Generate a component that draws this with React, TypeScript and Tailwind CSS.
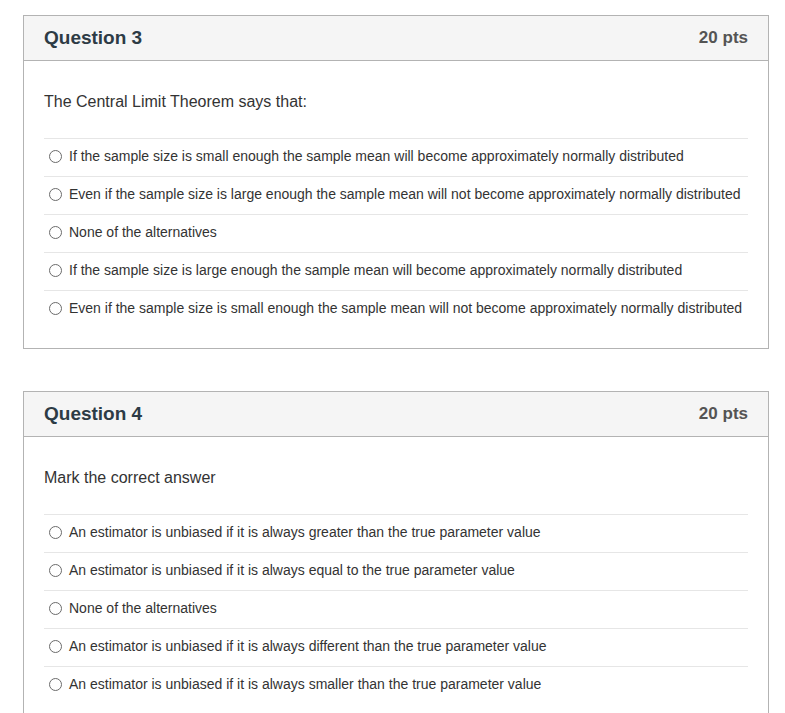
import React from "react";

const questions = [
  {
    title: "Question 3",
    pts: "20 pts",
    text: "The Central Limit Theorem says that:",
    options: [
      "If the sample size is small enough the sample mean will become approximately normally distributed",
      "Even if the sample size is large enough the sample mean will not become approximately normally distributed",
      "None of the alternatives",
      "If the sample size is large enough the sample mean will become approximately normally distributed",
      "Even if the sample size is small enough the sample mean will not become approximately normally distributed",
    ],
  },
  {
    title: "Question 4",
    pts: "20 pts",
    text: "Mark the correct answer",
    options: [
      "An estimator is unbiased if it is always greater than the true parameter value",
      "An estimator is unbiased if it is always equal to the true parameter value",
      "None of the alternatives",
      "An estimator is unbiased if it is always different than the true parameter value",
      "An estimator is unbiased if it is always smaller than the true parameter value",
    ],
  },
];

export default function App() {
  return (
    <div
      className="min-h-[713px] bg-white pl-[23px] pr-[16px] pt-[15px] text-[#2d3b45]"
      style={{ fontFamily: '"Liberation Sans", Arial, sans-serif' }}
    >
      <div className="flex flex-col gap-[42px] w-[746px]">
        {questions.map((q) => (
          <div key={q.title} className="border border-[#b3b3b3] bg-white">
            <div className="flex h-[45px] items-center justify-between border-b border-[#b3b3b3] bg-[#f5f5f5] px-[20px]">
              <span className="text-[19px] font-bold text-[#2d3b45]">{q.title}</span>
              <span className="text-[17px] font-bold text-[#545454]">{q.pts}</span>
            </div>
            <div className="px-[20px] pt-[29px] pb-[20px]">
              <div className="text-[16px] leading-[24px] text-[#333333]">{q.text}</div>
              <div className="mt-[24px]">
                {q.options.map((o) => (
                  <div
                    key={o}
                    className="flex h-[38px] items-center border-t border-[#e6e6e6] pl-[5px] pb-[2px]"
                  >
                    <span className="h-[13px] w-[13px] shrink-0 rounded-full border border-[#6b6b6b] bg-white" />
                    <span className="ml-[7px] text-[14px] text-[#333333]">{o}</span>
                  </div>
                ))}
              </div>
            </div>
          </div>
        ))}
      </div>
    </div>
  );
}
